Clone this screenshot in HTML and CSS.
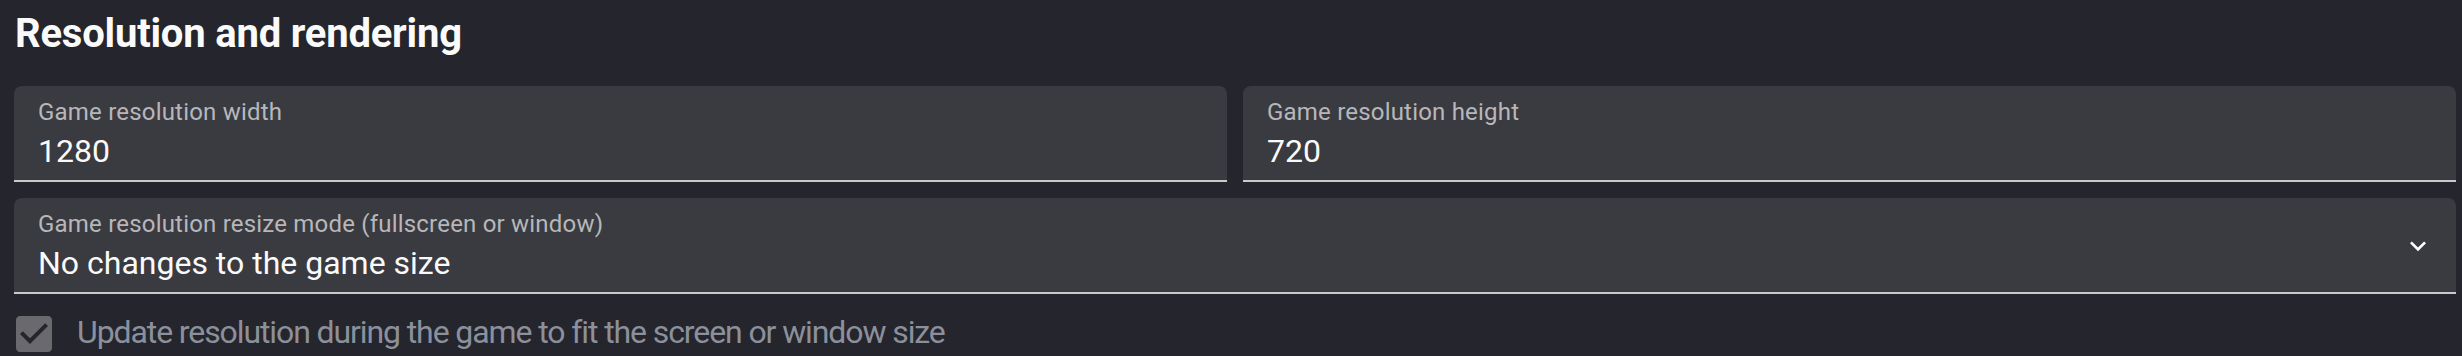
FILE: index.html
```html
<!DOCTYPE html>
<html lang="en">
<head>
<meta charset="utf-8">
<title>Resolution and rendering</title>
<link rel="stylesheet" href="styles.css">
</head>
<body>
<div class="page">
  <h1 class="title">Resolution and rendering</h1>
  <div class="row">
    <div class="field">
      <div class="label">Game resolution width</div>
      <div class="value">1280</div>
    </div>
    <div class="field">
      <div class="label">Game resolution height</div>
      <div class="value">720</div>
    </div>
  </div>
  <div class="field select">
    <div class="select-body">
      <div class="label">Game resolution resize mode (fullscreen or window)</div>
      <div class="value">No changes to the game size</div>
    </div>
    <svg class="chevron" viewBox="0 0 24 24" width="32" height="32"><path d="M16.59 8.59L12 13.17 7.41 8.59 6 10l6 6 6-6z"/></svg>
  </div>
  <label class="check-row">
    <svg class="checkbox" viewBox="0 0 24 24" width="48" height="48"><path fill-rule="evenodd" d="M19 3H5c-1.11 0-2 .9-2 2v14c0 1.1.89 2 2 2h14c1.11 0 2-.9 2-2V5c0-1.1-.89-2-2-2zm-9 14l-5-5 1.41-1.41L10 14.17l7.59-7.59L19 8l-9 9z"/></svg>
    <span class="check-text">Update resolution during the game to fit the screen or window size</span>
  </label>
</div>
</body>
</html>
```

FILE: styles.css
```css
html, body {
  margin: 0;
  padding: 0;
  background: #25252d;
  height: 356px;
  overflow: hidden;
}
body {
  font-family: Roboto, "Liberation Sans", sans-serif;
  color: #fafafa;
}
.page {
  padding: 0 6px 0 14px;
}
.title {
  margin: 0;
  padding-top: 10px;
  height: 86px;
  box-sizing: border-box;
  font-size: 40px;
  line-height: 48px;
  font-weight: 700;
  color: #fafafa;
  padding-left: 1px;
  letter-spacing: -0.2px;
}
.row {
  display: flex;
  gap: 16px;
  margin-bottom: 16px;
}
.row .field {
  flex: 1 1 0;
}
.field {
  height: 96px;
  box-sizing: border-box;
  background: #3a3b40;
  border-radius: 8px 8px 0 0;
  border-bottom: 2px solid #c9c9cb;
  padding: 11px 24px 0 24px;
}
.label {
  font-size: 24px;
  line-height: 30px;
  color: #b7b7bb;
  white-space: nowrap;
  letter-spacing: 0.2px;
}
.value {
  margin-top: 4px;
  font-size: 32px;
  line-height: 40px;
  color: #fafafa;
  white-space: nowrap;
}
.select {
  display: flex;
  align-items: center;
  padding-top: 0;
  padding-right: 22px;
}
.select-body {
  flex: 1;
  align-self: flex-start;
  padding-top: 11px;
}
.chevron {
  fill: #ffffff;
  flex: none;
  margin-top: 2px;
}
.check-row {
  display: flex;
  align-items: center;
  margin-top: 16px;
  margin-left: -4px;
}
.checkbox {
  fill: #69696e;
  flex: none;
}
.check-text {
  margin-left: 19px;
  margin-bottom: 4px;
  font-size: 32px;
  line-height: 40px;
  color: #8b909b;
  white-space: nowrap;
  letter-spacing: -1.1px;
}
```
